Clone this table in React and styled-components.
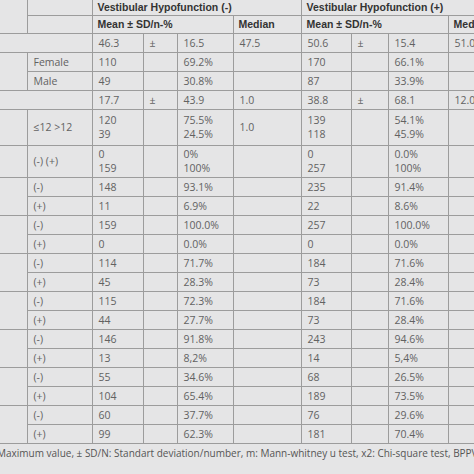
import React from "react";
import styled, {createGlobalStyle} from "styled-components";

const Global = createGlobalStyle`
html, body {
    margin: 0;
    padding: 0;
    background: #e5e5e6;
    overflow: hidden;
}
`

const Page = styled.div`
width: 474px;
height: 474px;
overflow: hidden;
background: #e5e5e6;
`

const Table = styled.table`
border-collapse: collapse;
border-style: hidden;
table-layout: fixed;
width: 508px;
font-family: "Open Sans", "Noto Sans", sans-serif;
font-size: 10.5px;
color: #626262;
`

const Col = styled.col`
width: ${p => p.$w}px;
`

const Row = styled.tr`
height: ${p => p.$h || 19}px;
`

const Cell = styled.td`
border: 1px solid #9c9c9c;
padding: 0 0 0 6px;
line-height: ${p => p.$multi ? 14 : 16}px;
vertical-align: middle;
white-space: nowrap;
overflow: hidden;
`

const Head = styled.th`
border: 1px solid #9c9c9c;
padding: 0 0 0 5px;
text-align: left;
font-family: "Liberation Sans", Arial, sans-serif;
font-weight: bold;
font-size: 10.5px;
color: #333;
line-height: 14px;
white-space: nowrap;
overflow: hidden;
`

const Footnote = styled.div`
border-top: 1px solid #9c9c9c;
padding-top: 2px;
font-family: "Open Sans", "Noto Sans", sans-serif;
font-size: 10px;
line-height: 15px;
color: #555;
white-space: nowrap;
overflow: hidden;
text-indent: -3px;
`

const widths = [27, 65, 51, 34, 56, 68, 50, 37, 60, 60]

const pairs = [
    [["(-)", "148", "93.1%", "235", "91.4%"], ["(+)", "11", "6.9%", "22", "8.6%"]],
    [["(-)", "159", "100.0%", "257", "100.0%"], ["(+)", "0", "0.0%", "0", "0.0%"]],
    [["(-)", "114", "71.7%", "184", "71.6%"], ["(+)", "45", "28.3%", "73", "28.4%"]],
    [["(-)", "115", "72.3%", "184", "71.6%"], ["(+)", "44", "27.7%", "73", "28.4%"]],
    [["(-)", "146", "91.8%", "243", "94.6%"], ["(+)", "13", "8,2%", "14", "5,4%"]],
    [["(-)", "55", "34.6%", "68", "26.5%"], ["(+)", "104", "65.4%", "189", "73.5%"]],
    [["(-)", "60", "37.7%", "76", "29.6%"], ["(+)", "99", "62.3%", "181", "70.4%"]],
]

const Lines = ({items}) => items.map((t, i) => <React.Fragment key={i}>{i > 0 && <br/>}{t}</React.Fragment>)

const PairRow = ({row, first}) => (
    <Row>
        {first && <Cell rowSpan={2}/>}
        <Cell>{row[0]}</Cell>
        <Cell>{row[1]}</Cell>
        <Cell/>
        <Cell>{row[2]}</Cell>
        <Cell/>
        <Cell>{row[3]}</Cell>
        <Cell/>
        <Cell>{row[4]}</Cell>
        <Cell/>
    </Row>
)

const App = () => {
    return <Page>
        <Global/>
        <Table>
            <colgroup>
                {widths.map((w, i) => <Col key={i} $w={w}/>)}
            </colgroup>
            <tbody>
                <Row $h={15}>
                    <Cell rowSpan={2}/>
                    <Cell/>
                    <Head colSpan={4}>Vestibular Hypofunction (-)</Head>
                    <Head colSpan={4}>Vestibular Hypofunction (+)</Head>
                </Row>
                <Row $h={18}>
                    <Cell/>
                    <Head colSpan={3}>Mean ± SD/n-%</Head>
                    <Head>Median</Head>
                    <Head colSpan={3}>Mean ± SD/n-%</Head>
                    <Head>Median</Head>
                </Row>
                <Row>
                    <Cell colSpan={2}/>
                    {["46.3", "±", "16.5", "47.5", "50.6", "±", "15.4", "51.0"].map((t, i) => <Cell key={i}>{t}</Cell>)}
                </Row>
                <Row>
                    <Cell rowSpan={2}/>
                    <Cell>Female</Cell>
                    <Cell>110</Cell><Cell/><Cell>69.2%</Cell><Cell/>
                    <Cell>170</Cell><Cell/><Cell>66.1%</Cell><Cell/>
                </Row>
                <Row>
                    <Cell>Male</Cell>
                    <Cell>49</Cell><Cell/><Cell>30.8%</Cell><Cell/>
                    <Cell>87</Cell><Cell/><Cell>33.9%</Cell><Cell/>
                </Row>
                <Row>
                    <Cell colSpan={2}/>
                    {["17.7", "±", "43.9", "1.0", "38.8", "±", "68.1", "12.0"].map((t, i) => <Cell key={i}>{t}</Cell>)}
                </Row>
                <Row $h={36}>
                    <Cell/>
                    <Cell>≤12 &gt;12</Cell>
                    <Cell $multi><Lines items={["120", "39"]}/></Cell>
                    <Cell/>
                    <Cell $multi><Lines items={["75.5%", "24.5%"]}/></Cell>
                    <Cell>1.0</Cell>
                    <Cell $multi><Lines items={["139", "118"]}/></Cell>
                    <Cell/>
                    <Cell $multi><Lines items={["54.1%", "45.9%"]}/></Cell>
                    <Cell/>
                </Row>
                <Row $h={32}>
                    <Cell/>
                    <Cell>(-) (+)</Cell>
                    <Cell $multi><Lines items={["0", "159"]}/></Cell>
                    <Cell/>
                    <Cell $multi><Lines items={["0%", "100%"]}/></Cell>
                    <Cell/>
                    <Cell $multi><Lines items={["0", "257"]}/></Cell>
                    <Cell/>
                    <Cell $multi><Lines items={["0.0%", "100%"]}/></Cell>
                    <Cell/>
                </Row>
                {pairs.map((p, i) => <React.Fragment key={i}>
                    <PairRow row={p[0]} first/>
                    <PairRow row={p[1]}/>
                </React.Fragment>)}
            </tbody>
        </Table>
        <Footnote>Maximum value, ± SD/N: Standart deviation/number, m: Mann-whitney u test, x2: Chi-square test, BPPV: Benign paroxysmal positional vertigo</Footnote>
    </Page>
}

export default App;
